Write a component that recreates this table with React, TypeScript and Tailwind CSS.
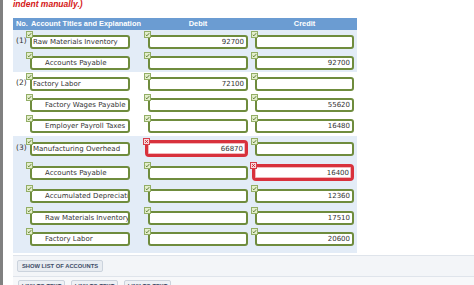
import React from 'react'

type Row = {
  no?: string
  account: string
  indent?: boolean
  debit?: string
  credit?: string
  debitError?: boolean
  creditError?: boolean
  h: number
}

type Group = { shade: boolean; pt: number; pb: number; rows: Row[] }

const groups: Group[] = [
  {
    shade: true,
    pt: 0,
    pb: 0,
    rows: [
      { no: '(1)', account: 'Raw Materials Inventory', debit: '92700', h: 21 },
      { account: 'Accounts Payable', indent: true, credit: '92700', h: 21 },
    ],
  },
  {
    shade: false,
    pt: 0,
    pb: 1,
    rows: [
      { no: '(2)', account: 'Factory Labor', debit: '72100', h: 21 },
      { account: 'Factory Wages Payable', indent: true, credit: '55620', h: 21 },
      { account: 'Employer Payroll Taxes', indent: true, credit: '16480', h: 21 },
    ],
  },
  {
    shade: true,
    pt: 1,
    pb: 5,
    rows: [
      { no: '(3)', account: 'Manufacturing Overhead', debit: '66870', debitError: true, h: 24 },
      { account: 'Accounts Payable', indent: true, credit: '16400', creditError: true, h: 23 },
      { account: 'Accumulated Depreciation', indent: true, credit: '12360', h: 22 },
      { account: 'Raw Materials Inventory', indent: true, credit: '17510', h: 21 },
      { account: 'Factory Labor', indent: true, credit: '20600', h: 21 },
    ],
  },
]

const arial = { fontFamily: '"Liberation Sans", Arial, sans-serif' }

function CheckIcon() {
  return (
    <svg width="7" height="7" viewBox="0 0 7 7" className="absolute left-[-4px] top-[1px]">
      <rect x="0.5" y="0.5" width="6" height="6" fill="#e3eecb" stroke="#93ae66" />
      <path d="M1.8 3.8 L2.9 4.8 L5.2 2.2" fill="none" stroke="#4f6d26" strokeWidth="0.9" />
    </svg>
  )
}

function CrossIcon() {
  return (
    <svg width="7" height="7" viewBox="0 0 7 7" className="absolute left-[-5px] top-[1px] z-10">
      <rect x="0.5" y="0.5" width="6" height="6" fill="#f8d9dc" stroke="#d6404b" />
      <path d="M2.2 2.2 L4.8 4.8 M4.8 2.2 L2.2 4.8" fill="none" stroke="#c81e2b" strokeWidth="1" />
    </svg>
  )
}

function Field({
  value,
  right,
  indent,
  error,
  width,
}: {
  value?: string
  right?: boolean
  indent?: boolean
  error?: boolean
  width: string
}) {
  const text = (
    <div
      className={`text-[7px] leading-[10px] text-[#333] whitespace-nowrap overflow-hidden ${
        right ? 'text-right pr-[2px]' : indent ? 'pl-[13px]' : 'pl-[1px]'
      }`}
    >
      {value || '\u00a0'}
    </div>
  )
  return (
    <div className={`relative pt-[5px] shrink-0 ${width}`}>
      {error ? (
        <div className="h-[17px] ml-[-3px] mt-[-2px] border-[3px] border-[#d8313c] rounded-[4px] bg-white shadow-[inset_0_0_0_1px_#f3b7bb]">
          <div className="pt-[1px]">{text}</div>
        </div>
      ) : (
        <div className="h-[14px] border-2 border-[#6f8c3d] rounded-[3px] bg-white">{text}</div>
      )}
      {error ? <CrossIcon /> : <CheckIcon />}
    </div>
  )
}

export default function App() {
  return (
    <div
      className="w-[474px] h-[285px] overflow-hidden bg-white flex"
      style={{ fontFamily: '"DejaVu Sans", Verdana, sans-serif' }}
    >
      <div className="w-[3px] h-full bg-[#808080] shrink-0" />
      <div className="flex-1 pl-[10px] flex flex-col">
        <div
          className="h-[19px] shrink-0 mt-[-1px] text-[8.5px] leading-[10px] font-bold italic text-[#d41616]"
          style={arial}
        >
          indent manually.)
        </div>

        <div className="w-[344px] shrink-0">
          <div className="h-[12px] bg-[#6b9cd2] text-white font-bold text-[7.4px] leading-[12px] flex" style={arial}>
            <div className="w-[17px] pl-[3px]">No.</div>
            <div className="w-[118px] pl-[1px]">Account Titles and Explanation</div>
            <div className="w-[100px] text-center">Debit</div>
            <div className="w-[7px]" />
            <div className="w-[99px] text-center">Credit</div>
          </div>

          {groups.map((g, gi) => (
            <div
              key={gi}
              className={g.shade ? 'bg-[#e3ecf7]' : 'bg-white'}
              style={{ paddingTop: g.pt, paddingBottom: g.pb }}
            >
              {g.rows.map((r, ri) => (
                <div key={ri} className="flex items-start" style={{ height: r.h }}>
                  <div className="w-[17px] shrink-0 pt-[6px] pl-[3px] text-[7.5px] leading-[9px] text-[#333]">
                    {r.no}
                  </div>
                  <Field value={r.account} indent={r.indent} width="w-[100px]" />
                  <div className="w-[18px] shrink-0" />
                  <Field value={r.debit} right error={r.debitError} width="w-[100px]" />
                  <div className="w-[7px] shrink-0" />
                  <Field value={r.credit} right error={r.creditError} width="w-[99px]" />
                </div>
              ))}
            </div>
          ))}
        </div>

        <div className="shrink-0 mt-[2px] h-[21px] bg-[#f3f5f8] border-t border-[#dfe4eb] pl-[4px] pt-[4px]">
          <div
            className="w-[86px] h-[12px] bg-[#e8ecf1] border border-[#cbd3dd] rounded-[2px] text-[5.8px] font-bold leading-[10px] text-center text-[#3c4b66] whitespace-nowrap"
            style={arial}
          >
            SHOW LIST OF ACCOUNTS
          </div>
        </div>
        <div className="flex-1 bg-[#f7f8fa] border-t border-[#dfe4eb] pl-[5px] pt-[3px] flex gap-[6px]">
          {['LINK TO TEXT', 'LINK TO TEXT', 'LINK TO TEXT'].map((t, i) => (
            <div
              key={i}
              className="w-[47px] h-[12px] shrink-0 bg-[#eef1f5] border border-[#cbd3dd] rounded-[2px] text-[5.8px] font-bold leading-[10px] text-center text-[#3c4b66] whitespace-nowrap"
              style={arial}
            >
              {t}
            </div>
          ))}
        </div>
      </div>
    </div>
  )
}
